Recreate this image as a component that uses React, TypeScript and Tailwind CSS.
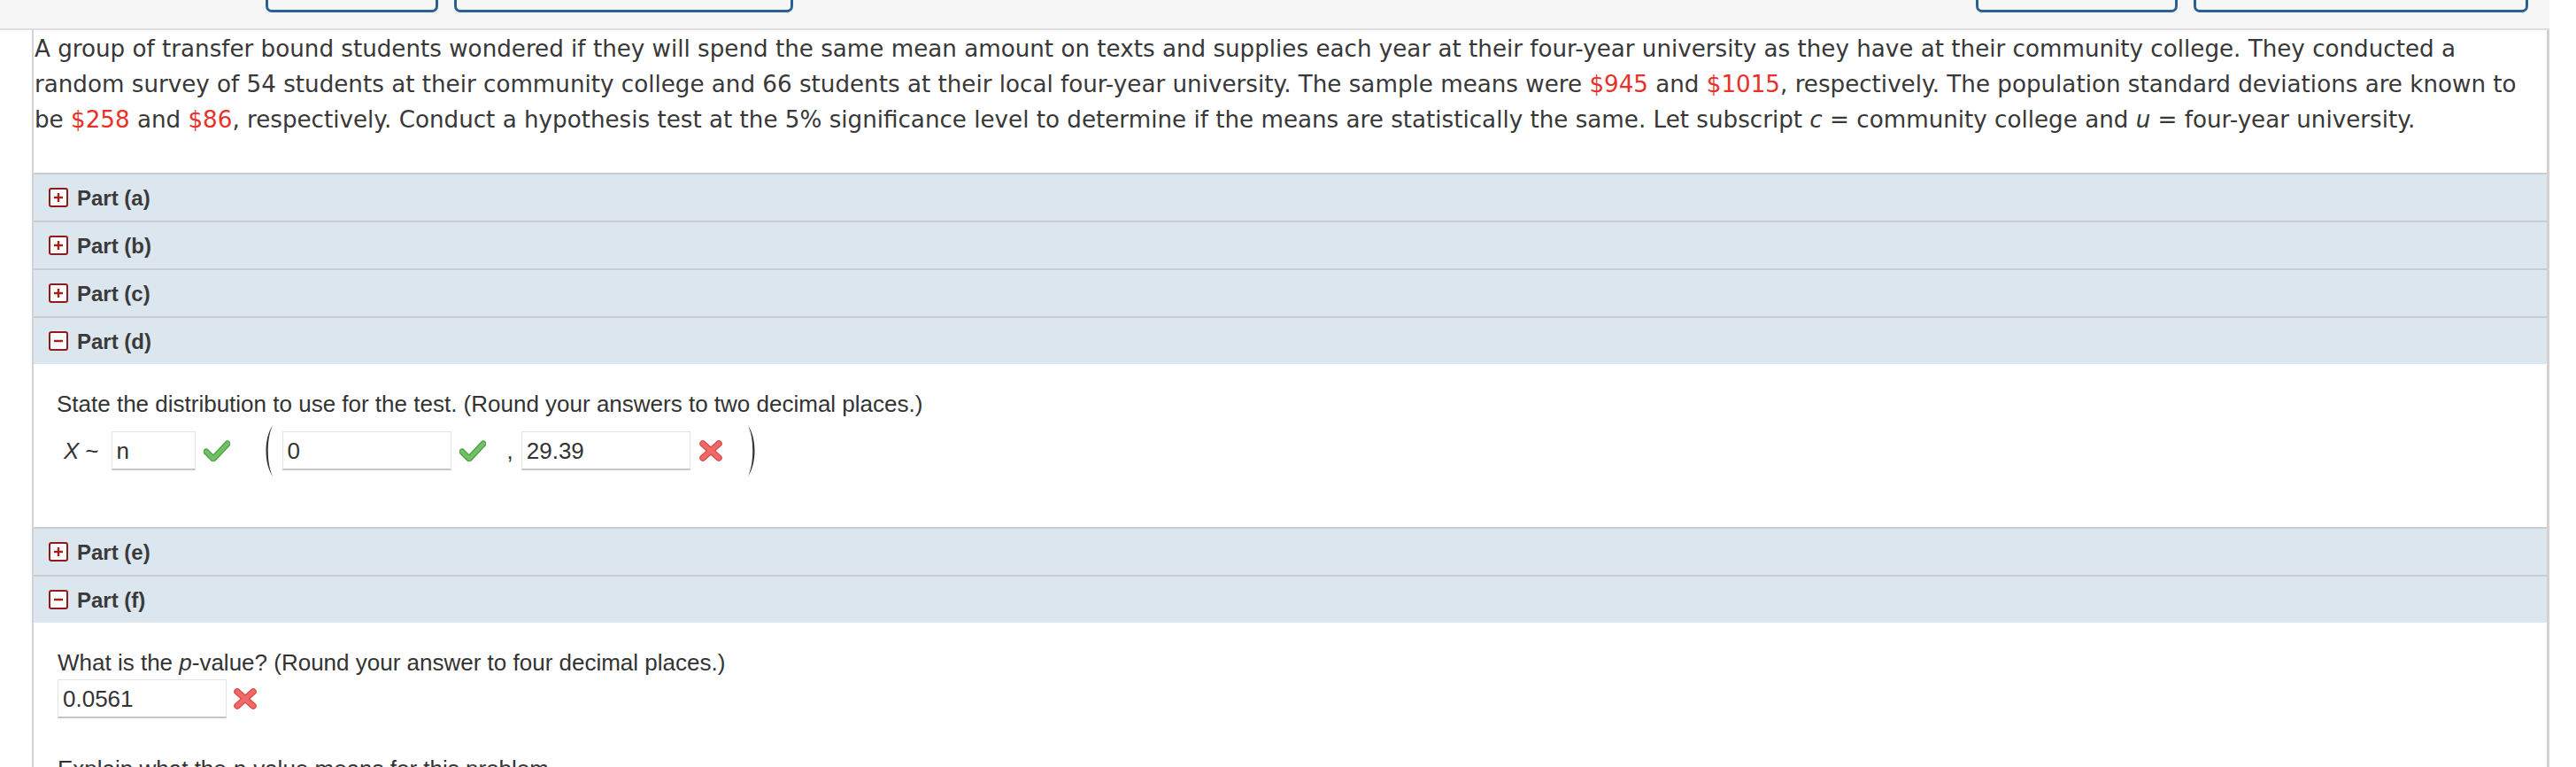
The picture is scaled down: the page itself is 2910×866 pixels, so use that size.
import React from "react";

const RED = "text-[#e8312a]";

function ToggleIcon({ open }: { open: boolean }) {
  return (
    <div className="w-[22px] h-[22px] border-2 border-[#8e1c1c] rounded-[3px] bg-[#fbfbfb] flex items-center justify-center shrink-0">
      <svg width="12" height="12" viewBox="0 0 12 12">
        <rect x="1" y="4.8" width="10" height="2.4" fill="#a3201f" />
        {!open && <rect x="4.8" y="1" width="2.4" height="10" fill="#a3201f" />}
      </svg>
    </div>
  );
}

function PartHeader({ label, open }: { label: string; open?: boolean }) {
  return (
    <div className="border-t-2 border-[#cccccc] h-[54px] bg-[#dce6ef] flex items-center pl-[17px] gap-[10px]">
      <ToggleIcon open={!!open} />
      <span className="font-['Liberation_Sans',Arial,sans-serif] font-bold text-[24px] text-[#3a3a3a] leading-[28px] mt-[2px]">
        {label}
      </span>
    </div>
  );
}

function Check() {
  return (
    <svg width="30" height="24" viewBox="0 0 30 24" className="shrink-0">
      <path d="M3 13 L11 21 L27 4" fill="none" stroke="#4f9e46" strokeWidth="7" strokeLinecap="round" strokeLinejoin="round" />
      <path d="M3 13 L11 21 L27 4" fill="none" stroke="#6ec264" strokeWidth="4.5" strokeLinecap="round" strokeLinejoin="round" />
    </svg>
  );
}

function Cross() {
  return (
    <svg width="28" height="24" viewBox="0 0 28 24" className="shrink-0">
      <g strokeLinecap="round">
        <path d="M5 4 L23 20 M23 4 L5 20" stroke="#dc4a47" strokeWidth="7.5" />
        <path d="M5 4 L23 20 M23 4 L5 20" stroke="#ee6a68" strokeWidth="5" />
      </g>
    </svg>
  );
}

function Paren({ right }: { right?: boolean }) {
  return (
    <svg width="14" height="58" viewBox="0 0 14 58" className="shrink-0 block">
      {right ? (
        <path d="M2 0 C12 15 12 43 2 58 C9 43 9 15 2 0 Z" fill="#333" />
      ) : (
        <path d="M12 0 C2 15 2 43 12 58 C5 43 5 15 12 0 Z" fill="#333" />
      )}
    </svg>
  );
}

function Field({ value, w }: { value: string; w: string }) {
  return (
    <div
      className={`${w} h-[44px] shrink-0 bg-white border border-[#e4e4e4] border-b-2 border-b-[#c6c6c6] flex items-center px-[5px] font-['Liberation_Sans',Arial,sans-serif] text-[26px] leading-[30px] text-[#333]`}
    >
      {value}
    </div>
  );
}

export default function App() {
  const sans = "font-['Liberation_Sans',Arial,sans-serif]";
  return (
    <div className="w-[2910px] h-[866px] overflow-hidden bg-white">
      <div className="w-[2880px]">
        {/* top bar */}
        <div className="h-[34px] bg-[#f6f6f6] border-b-2 border-[#dddddd] flex items-start">
          <div className="flex gap-[18px] ml-[300px]">
            <div className="w-[195px] h-[14px] border-[3px] border-t-0 border-[#2c5f95] rounded-b-[7px]" />
            <div className="w-[383px] h-[14px] border-[3px] border-t-0 border-[#2c5f95] rounded-b-[7px]" />
          </div>
          <div className="flex gap-[18px] ml-auto mr-[24px]">
            <div className="w-[228px] h-[14px] border-[3px] border-t-0 border-[#2c5f95] rounded-b-[7px]" />
            <div className="w-[378px] h-[14px] border-[3px] border-t-0 border-[#2c5f95] rounded-b-[7px]" />
          </div>
        </div>

        {/* panel */}
        <div className="ml-[36px] border-l-2 border-r-[3px] border-[#d2d2d2]">
          <div className="pt-[1px] pb-[40px] pl-[1px] font-['DejaVu_Sans',Verdana,sans-serif] text-[26.17px] leading-[40px] text-[#383838]">
            <div className="whitespace-nowrap">
              A group of transfer bound students wondered if they will spend the same mean amount on texts and supplies each year at their four-year university as they have at their community college. They conducted a
            </div>
            <div className="whitespace-nowrap">
              random survey of 54 students at their community college and 66 students at their local four-year university. The sample means were{" "}
              <span className={RED}>$945</span> and <span className={RED}>$1015</span>, respectively. The population standard deviations are known to
            </div>
            <div className="whitespace-nowrap">
              be <span className={RED}>$258</span> and <span className={RED}>$86</span>, respectively. Conduct a hypothesis test at the 5% significance level to determine if the means are statistically the same. Let subscript <i>c</i> = community college and <i>u</i> = four-year university.
            </div>
          </div>

          <PartHeader label="Part (a)" />
          <PartHeader label="Part (b)" />
          <PartHeader label="Part (c)" />
          <PartHeader label="Part (d)" open />

          <div className={`pt-[30px] pb-[57px] pl-[26px] ${sans} text-[26px] text-[#333]`}>
            <div className="leading-[30px]">
              State the distribution to use for the test. (Round your answers to two decimal places.)
            </div>
            <div className="mt-[9px] ml-[6px] flex items-center">
              <div className="italic px-[2px] leading-[30px]">X</div>
              <div className="ml-[4px] px-[1px] leading-[30px]">~</div>
              <div className="ml-[13px]">
                <Field value="n" w="w-[95px]" />
              </div>
              <div className="ml-[9px]">
                <Check />
              </div>
              <div className="ml-[36px]">
                <Paren />
              </div>
              <div className="ml-[9px]">
                <Field value="0" w="w-[191px]" />
              </div>
              <div className="ml-[9px]">
                <Check />
              </div>
              <div className="ml-[23px] px-[1px] leading-[30px]">,</div>
              <div className="ml-[8px]">
                <Field value="29.39" w="w-[191px]" />
              </div>
              <div className="ml-[9px]">
                <Cross />
              </div>
              <div className="ml-[26px]">
                <Paren right />
              </div>
            </div>
          </div>

          <PartHeader label="Part (e)" />
          <PartHeader label="Part (f)" open />

          <div className={`pt-[30px] pl-[27px] ${sans} text-[26px] text-[#333]`}>
            <div className="leading-[30px]">
              What is the <i>p</i>-value? (Round your answer to four decimal places.)
            </div>
            <div className="mt-[4px] flex items-center">
              <Field value="0.0561" w="w-[191px]" />
              <div className="ml-[7px]">
                <Cross />
              </div>
            </div>
            <div className="mt-[42px] leading-[30px]">
              Explain what the <i>p</i>-value means for this problem.
            </div>
          </div>
        </div>
      </div>
    </div>
  );
}
